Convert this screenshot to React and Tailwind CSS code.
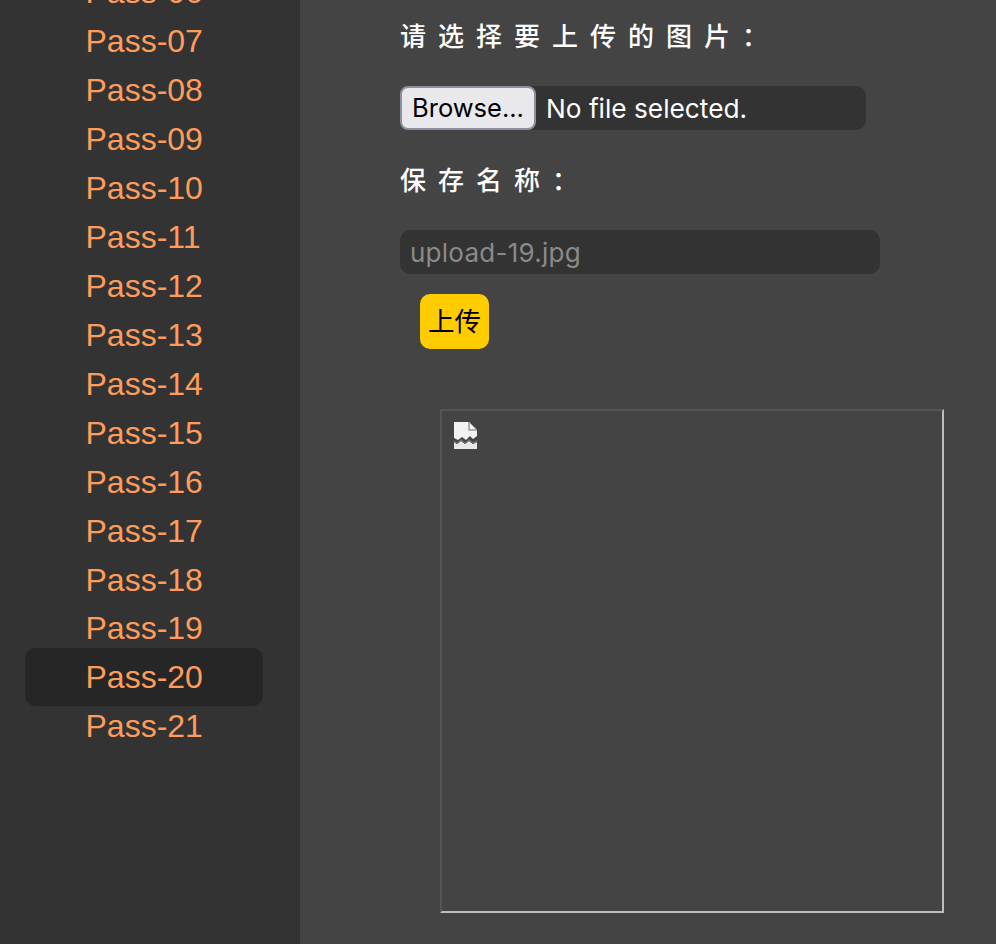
const sans = '"Liberation Sans", Arial, sans-serif';
const ui = 'Inter, "Noto Sans CJK SC", sans-serif';

const passes = ["06", "07", "08", "09", "10", "11", "12", "13", "14", "15", "16", "17", "18", "19", "20", "21"];

function BrokenImage() {
  return (
    <svg width="26" height="29" viewBox="0 0 26 29" className="block">
      <path d="M1 1h15l8 8v6l-4 3-3-3-4 4-4-3-4 3-4-2z" fill="#f2f2f2" />
      <path d="M16 1v8h8" fill="none" stroke="#9a9a9a" strokeWidth="1.5" />
      <path d="M1 21l3 2 4-3 4 3 4-3 4 3 4-2v7H1z" fill="#e8e8e8" />
      <path d="M1 20l3 2 4-3 4 3 4-3 4 3 4-2" fill="none" stroke="#6a6a6a" strokeWidth="1.5" />
    </svg>
  );
}

export default function App() {
  return (
    <div className="flex h-screen overflow-hidden bg-[#444444]">
      <aside className="w-[300px] shrink-0 bg-[#333333]">
        <ul className="mt-[-32px] ml-[25px]" style={{ fontFamily: sans }}>
          {passes.map((p) => (
            <li key={p} className="h-[48.93px] flex items-center">
              <a
                className={
                  "w-[238px] h-[58px] shrink-0 flex items-center pl-[60.5px] rounded-[10px] text-[32px] text-[#ff9c5b] " +
                  (p === "20" ? "bg-[#262626]" : "")
                }
              >
                Pass-{p}
              </a>
            </li>
          ))}
        </ul>
      </aside>

      <main className="flex-1 pl-[100px]" style={{ fontFamily: ui }}>
        <div className="mt-[19px] h-[36px] flex items-center text-[26px] font-medium leading-none tracking-[12px] text-white">
          请选择要上传的图片：
        </div>

        <div className="mt-[31px] w-[466px] h-[44px] flex items-center rounded-[10px] bg-[#333333] text-white text-[26.25px]">
          <button className="w-[136px] h-[44px] pt-px rounded-[8px] border-2 border-[#8f8f9d] bg-[#e9e9ed] text-black text-[25.5px]">
            Browse...
          </button>
          <span className="ml-[10px] pt-px">No file selected.</span>
        </div>

        <div className="mt-[33px] h-[36px] flex items-center text-[26px] font-medium leading-none tracking-[12px] text-white">
          保存名称：
        </div>

        <input
          className="block mt-[31px] w-[480px] h-[44px] rounded-[10px] bg-[#333333] px-[10px] text-[26px] tracking-[0.25px] text-white placeholder:text-[#8a8a8a] outline-none"
          placeholder="upload-19.jpg"
        />

        <button className="block mt-[20px] ml-[20px] w-[69px] h-[55px] rounded-[10px] bg-[#ffcc00] text-black text-[26.5px]">
          上传
        </button>

        <div className="mt-[60px] ml-[40px] w-[504px] h-[504px] border-2 border-t-[#555555] border-l-[#555555] border-r-[#bdbdbd] border-b-[#bdbdbd] pl-[11px] pt-[10px]">
          <BrokenImage />
        </div>
      </main>
    </div>
  );
}
